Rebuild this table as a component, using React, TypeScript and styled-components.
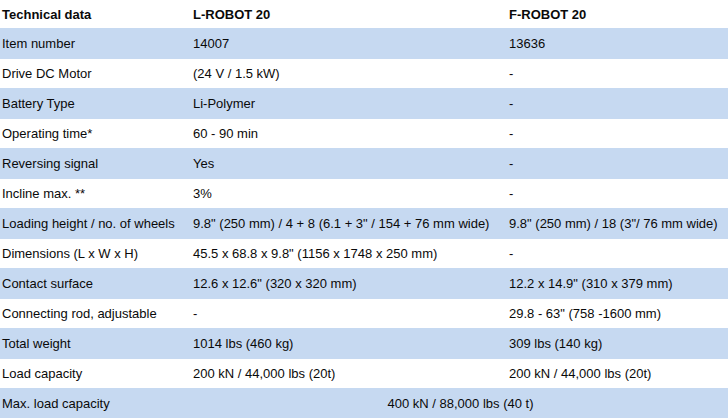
import React from "react";
import styled, { createGlobalStyle } from "styled-components";

const Global = createGlobalStyle`
  html, body { margin: 0; padding: 0; background: #ffffff; }
  body { font-family: "Liberation Sans", Arial, sans-serif; font-size: 13px; color: #0a0a0a; }
`;

const Table = styled.div`
  width: 728px;
  display: flex;
  flex-direction: column;
`;

const Row = styled.div<{ $shaded?: boolean; $head?: boolean }>`
  display: grid;
  grid-template-columns: 191px 316px 221px;
  height: ${(p) => (p.$head ? 28 : 30)}px;
  align-items: center;
  background: ${(p) => (p.$shaded ? "#c6d9f1" : "transparent")};
  box-shadow: ${(p) => (p.$shaded ? "0 1px 0 #c6d9f1" : "none")};
  font-weight: ${(p) => (p.$head ? 700 : 400)};
  white-space: nowrap;
`;

const Cell = styled.div<{ $span?: boolean }>`
  padding-left: 2px;
  grid-column: ${(p) => (p.$span ? "span 2" : "auto")};
  text-align: ${(p) => (p.$span ? "center" : "left")};
  line-height: 15px;
`;

const rows: [string, string, string][] = [
  ["Item number", "14007", "13636"],
  ["Drive DC Motor", "(24 V / 1.5 kW)", "-"],
  ["Battery Type", "Li-Polymer", "-"],
  ["Operating time*", "60 - 90 min", "-"],
  ["Reversing signal", "Yes", "-"],
  ["Incline max. **", "3%", "-"],
  [
    "Loading height / no. of wheels",
    "9.8\" (250 mm) / 4 + 8 (6.1 + 3\" / 154 + 76 mm wide)",
    "9.8\" (250 mm) / 18 (3\"/ 76 mm wide)",
  ],
  ["Dimensions (L x W x H)", "45.5 x 68.8 x 9.8\" (1156 x 1748 x 250 mm)", "-"],
  ["Contact surface", "12.6 x 12.6\" (320 x 320 mm)", "12.2 x 14.9\" (310 x 379 mm)"],
  ["Connecting rod, adjustable", "-", "29.8 - 63\" (758 -1600 mm)"],
  ["Total weight", "1014 lbs (460 kg)", "309 lbs (140 kg)"],
  ["Load capacity", "200 kN / 44,000 lbs (20t)", "200 kN / 44,000 lbs (20t)"],
];

export default function App() {
  return (
    <>
      <Global />
      <Table>
        <Row $head>
          <Cell>Technical data</Cell>
          <Cell>L-ROBOT 20</Cell>
          <Cell>F-ROBOT 20</Cell>
        </Row>
        {rows.map((r, i) => (
          <Row key={r[0]} $shaded={i % 2 === 0}>
            <Cell>{r[0]}</Cell>
            <Cell>{r[1]}</Cell>
            <Cell>{r[2]}</Cell>
          </Row>
        ))}
        <Row $shaded>
          <Cell>Max. load capacity</Cell>
          <Cell $span>400 kN / 88,000 lbs (40 t)</Cell>
        </Row>
      </Table>
    </>
  );
}
